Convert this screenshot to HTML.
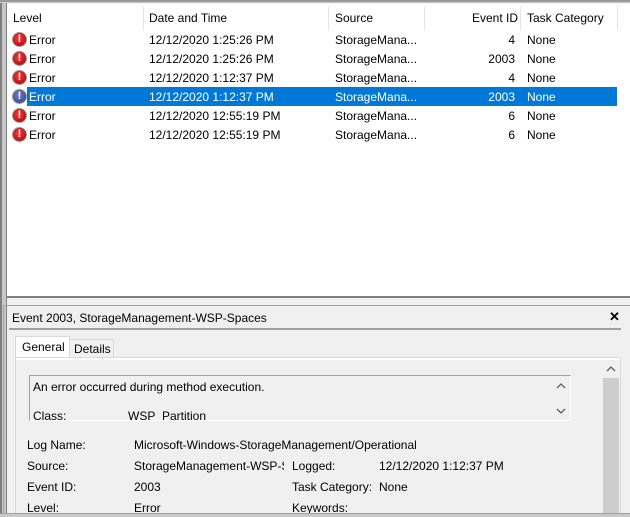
<!DOCTYPE html><html><head><style>
*{margin:0;padding:0;box-sizing:border-box}
body{width:630px;height:517px;overflow:hidden;background:#f0f0f0;font-family:"Liberation Sans",sans-serif;font-size:12px;color:#000;position:relative}
.a{position:absolute;white-space:nowrap}
.ic{position:absolute;left:12px;width:15px;height:15px;border-radius:50%;background:radial-gradient(circle at 45% 40%,#f04040,#c01010 70%);border:1.5px solid #9a9a9a;color:#fff;font-weight:bold;font-size:11px;text-align:center;line-height:12px}
.ic.b{background:radial-gradient(circle at 45% 40%,#7080c0,#4050a0 70%)}
</style></head><body>
<div class="a" style="left:0;top:0;width:7px;height:517px;background:#c8c8c8;border-left:2px solid #808080;border-right:1px solid #808080"></div>
<div class="a" style="left:0;top:0;width:630px;height:3px;background:#999;border-bottom:1px solid #ccc"></div>
<div class="a" style="left:7px;top:4px;width:623px;height:294px;background:#fff;border-bottom:2px solid #808080"></div>
<div class="a" style="left:143px;top:6px;width:1px;height:24px;background:#e5e5e5"></div>
<div class="a" style="left:328px;top:6px;width:1px;height:24px;background:#e5e5e5"></div>
<div class="a" style="left:424px;top:6px;width:1px;height:24px;background:#e5e5e5"></div>
<div class="a" style="left:520px;top:6px;width:1px;height:24px;background:#e5e5e5"></div>
<div class="a" style="left:617px;top:6px;width:1px;height:24px;background:#e5e5e5"></div>
<div class="a" style="left:13px;top:11px">Level</div>
<div class="a" style="left:149px;top:11px">Date and Time</div>
<div class="a" style="left:335px;top:11px">Source</div>
<div class="a" style="left:472px;top:11px">Event ID</div>
<div class="a" style="left:527px;top:11px">Task Category</div>
<div class="a" style="left:27px;top:87px;width:590px;height:19px;background:#0078d7"></div>

<div class="ic" style="top:32px">!</div>
<div class="ic" style="top:51px">!</div>
<div class="ic" style="top:70px">!</div>
<div class="ic b" style="top:89px">!</div>
<div class="ic" style="top:108px">!</div>
<div class="ic" style="top:127px">!</div>

<div class="a" style="left:29px;top:33px">Error</div><div class="a" style="left:149px;top:33px">12/12/2020 1:25:26 PM</div><div class="a" style="left:335px;top:33px">StorageMana...</div><div class="a" style="left:420px;top:33px;width:95px;text-align:right">4</div><div class="a" style="left:527px;top:33px">None</div>
<div class="a" style="left:29px;top:52px">Error</div><div class="a" style="left:149px;top:52px">12/12/2020 1:25:26 PM</div><div class="a" style="left:335px;top:52px">StorageMana...</div><div class="a" style="left:420px;top:52px;width:95px;text-align:right">2003</div><div class="a" style="left:527px;top:52px">None</div>
<div class="a" style="left:29px;top:71px">Error</div><div class="a" style="left:149px;top:71px">12/12/2020 1:12:37 PM</div><div class="a" style="left:335px;top:71px">StorageMana...</div><div class="a" style="left:420px;top:71px;width:95px;text-align:right">4</div><div class="a" style="left:527px;top:71px">None</div>
<div class="a" style="left:29px;top:90px;color:#fff">Error</div><div class="a" style="left:149px;top:90px;color:#fff">12/12/2020 1:12:37 PM</div><div class="a" style="left:335px;top:90px;color:#fff">StorageMana...</div><div class="a" style="left:420px;top:90px;width:95px;text-align:right;color:#fff">2003</div><div class="a" style="left:527px;top:90px;color:#fff">None</div>
<div class="a" style="left:29px;top:109px">Error</div><div class="a" style="left:149px;top:109px">12/12/2020 12:55:19 PM</div><div class="a" style="left:335px;top:109px">StorageMana...</div><div class="a" style="left:420px;top:109px;width:95px;text-align:right">6</div><div class="a" style="left:527px;top:109px">None</div>
<div class="a" style="left:29px;top:128px">Error</div><div class="a" style="left:149px;top:128px">12/12/2020 12:55:19 PM</div><div class="a" style="left:335px;top:128px">StorageMana...</div><div class="a" style="left:420px;top:128px;width:95px;text-align:right">6</div><div class="a" style="left:527px;top:128px">None</div>

<div class="a" style="left:3px;top:305px;width:627px;height:1px;background:#a0a0a0"></div>
<div class="a" style="left:3px;top:305px;width:1px;height:212px;background:#a0a0a0"></div>
<div class="a" style="left:12px;top:311px">Event 2003, StorageManagement-WSP-Spaces</div>
<div class="a" style="left:609px;top:309px;font-weight:bold;font-size:13px">✕</div>
<div class="a" style="left:9px;top:328px;width:612px;height:2px;background:#a0a0a0"></div>

<div class="a" style="left:15px;top:336px;width:55px;height:22px;background:#fff;border:1px solid #d9d9d9;border-bottom:none"></div>
<div class="a" style="left:22px;top:340px">General</div>
<div class="a" style="left:69px;top:339px;width:45px;height:19px;border:1px solid #d9d9d9;border-bottom:none"></div>
<div class="a" style="left:74px;top:342px">Details</div>
<div class="a" style="left:15px;top:357px;width:606px;height:160px;border:1px solid #d9d9d9;border-bottom:none;background:#f0f0f0"></div>
<div class="a" style="left:16px;top:358px;width:604px;height:2px;background:#fff"></div>
<div class="a" style="left:602px;top:360px;width:18px;height:157px;background:#f0f0f0"></div>
<div class="a" style="left:603px;top:378px;width:16px;height:139px;background:#cdcdcd"></div>
<svg class="a" style="left:606px;top:366px" width="10" height="6"><path d="M1 5L5 1L9 5" fill="none" stroke="#606060" stroke-width="1.3"/></svg>

<div class="a" style="left:29px;top:375px;width:542px;height:46px;border:1px solid #a0a0a0;border-right-color:#fff;border-bottom-color:#fff;background:#f0f0f0;overflow:hidden">
<div class="a" style="left:3px;top:4px">An error occurred during method execution.</div>
<div class="a" style="left:3px;top:33px">Class:</div>
<div class="a" style="left:98px;top:33px">WSP_Partition</div>
<svg class="a" style="left:526px;top:7px" width="10" height="6"><path d="M1 5L5 1L9 5" fill="none" stroke="#606060" stroke-width="1.3"/></svg>
<svg class="a" style="left:526px;top:32px" width="10" height="6"><path d="M1 1L5 5L9 1" fill="none" stroke="#606060" stroke-width="1.3"/></svg>
</div>

<div class="a" style="left:27px;top:438px">Log Name:</div><div class="a" style="left:134px;top:438px">Microsoft-Windows-StorageManagement/Operational</div>
<div class="a" style="left:27px;top:459px">Source:</div><div class="a" style="left:134px;top:459px;width:150px;overflow:hidden">StorageManagement-WSP-Spaces</div>
<div class="a" style="left:292px;top:459px">Logged:</div><div class="a" style="left:379px;top:459px">12/12/2020 1:12:37 PM</div>
<div class="a" style="left:27px;top:480px">Event ID:</div><div class="a" style="left:134px;top:480px">2003</div>
<div class="a" style="left:292px;top:480px">Task Category:</div><div class="a" style="left:379px;top:480px">None</div>
<div class="a" style="left:27px;top:501px">Level:</div><div class="a" style="left:134px;top:501px">Error</div>
<div class="a" style="left:292px;top:501px">Keywords:</div>
<div class="a" style="left:0;top:513px;width:630px;height:4px;background:#c8c8c8;border-top:1px solid #a0a0a0"></div>
</body></html>
